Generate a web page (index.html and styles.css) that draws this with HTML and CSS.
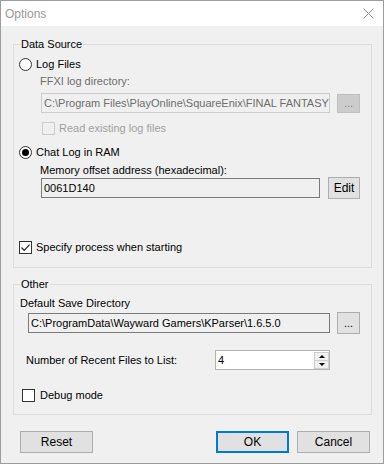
FILE: index.html
```html
<!DOCTYPE html>
<html>
<head>
  <title>Options</title>
  <link rel="stylesheet" href="styles.css">
</head>
<body>
  <div class="window">
    <div class="titlebar">
      <span class="title">Options</span>
      <svg class="close" width="11" height="11" viewBox="0 0 11 11">
        <path d="M0.5 0.5 L10.5 10.5 M10.5 0.5 L0.5 10.5" stroke="#8c8c8c" stroke-width="1" fill="none"/>
      </svg>
    </div>

    <div class="content">
      <fieldset class="group source">
        <legend>Data Source</legend>

        <div class="option first"><span class="radio"></span>Log Files</div>
        <div class="caption dim dir-caption">FFXI log directory:</div>
        <div class="field-row dir-row">
          <div class="textbox disabled dir-box">C:\Program Files\PlayOnline\SquareEnix\FINAL FANTASY XI</div>
          <div class="button disabled browse">...</div>
        </div>
        <div class="option disabled read"><span class="check"></span>Read existing log files</div>

        <div class="option ram"><span class="radio on"></span>Chat Log in RAM</div>
        <div class="caption offset-caption">Memory offset address (hexadecimal):</div>
        <div class="field-row offset-row">
          <div class="textbox offset-box">0061D140</div>
          <div class="button edit">Edit</div>
        </div>

        <div class="option process">
          <span class="check">
            <svg width="11" height="11" viewBox="0 0 11 11"><path d="M1.5 5.5 L4.2 8.3 L9.6 2.6" stroke="#222" stroke-width="1.2" fill="none"/></svg>
          </span>Specify process when starting
        </div>
      </fieldset>

      <fieldset class="group other">
        <legend>Other</legend>

        <div class="caption save-caption">Default Save Directory</div>
        <div class="field-row save-row">
          <div class="textbox save-box">C:\ProgramData\Wayward Gamers\KParser\1.6.5.0</div>
          <div class="button browse">...</div>
        </div>

        <div class="recent-row">
          <span>Number of Recent Files to List:</span>
          <div class="spinner">
            <span class="value">4</span>
            <div class="spin">
              <span class="up"></span>
              <span class="down"></span>
            </div>
          </div>
        </div>

        <div class="option debug"><span class="check"></span>Debug mode</div>
      </fieldset>

      <div class="actions">
        <div class="button action">Reset</div>
        <div class="button action ok">OK</div>
        <div class="button action">Cancel</div>
      </div>
    </div>
  </div>
</body>
</html>
```

FILE: styles.css
```css
body {
  margin: 0;
  background: #fff;
  font-family: "Liberation Sans", Arial, sans-serif;
  font-size: 11px;
  color: #000;
}

.window {
  width: 384px;
  height: 464px;
  box-sizing: border-box;
  border: 1px solid #9d9d9d;
  background: #f0f0f0;
}

.titlebar {
  height: 25px;
  background: #fff;
  display: flex;
  align-items: center;
  justify-content: space-between;
  padding: 0 9px 0 4px;
}

.title {
  font-size: 12px;
  color: #999;
}

.content {
  padding: 0 11px 0 12px;
}

/* group boxes */
.group {
  margin: 12px 0 0;
  padding: 0 0 13px;
  border: 1px solid #dcdcdc;
  min-width: 0;
}

.group legend {
  margin-left: 6px;
  padding: 0 1px;
  line-height: 13px;
}

.group.other {
  margin-top: 10px;
  padding-bottom: 12px;
}

/* radio / check rows */
.option {
  display: flex;
  align-items: center;
  height: 13px;
  line-height: 13px;
  margin-left: 5px;
}

.radio,
.check {
  width: 13px;
  height: 13px;
  box-sizing: border-box;
  border: 1px solid #333;
  background: #fff;
  margin-right: 4px;
  display: flex;
  align-items: center;
  justify-content: center;
  flex: none;
}

.radio {
  border-radius: 50%;
}

.radio.on::after {
  content: "";
  width: 7px;
  height: 7px;
  border-radius: 50%;
  background: #000;
}

.option.disabled {
  color: #a0a0a0;
}

.option.disabled .check {
  border-color: #cccccc;
  background: #f0f0f0;
}

.first { margin-top: 7px; }
.read { margin: 8px 0 0 28px; }
.ram { margin-top: 11px; }
.process { margin-top: 42px; }
.debug { margin: 19px 0 0 8px; }
.debug .check { margin-right: 5px; }

/* captions */
.caption {
  line-height: 13px;
}

.dim {
  color: #6d6d6d;
}

.dir-caption { margin: 4px 0 0 26px; }
.offset-caption { margin: 5px 0 0 26px; }
.save-caption { margin: 6px 0 0 6px; }

/* text boxes and buttons */
.field-row {
  display: flex;
  align-items: center;
  height: 22px;
}

.dir-row { margin: 4px 0 0 27px; }
.offset-row { margin: 0 0 0 27px; }
.save-row { margin: 2px 0 0 14px; }

.textbox {
  height: 20px;
  box-sizing: border-box;
  border: 1px solid #7a7a7a;
  background: #f0f0f0;
  padding: 0 2px;
  line-height: 18px;
  white-space: nowrap;
  overflow: hidden;
}

.textbox.disabled {
  border-color: #cccccc;
  color: #6d6d6d;
}

.dir-box { width: 289px; }
.offset-box { width: 279px; }
.save-box { width: 302px; }

.button {
  box-sizing: border-box;
  border: 1px solid #adadad;
  background: #e1e1e1;
  display: flex;
  align-items: center;
  justify-content: center;
}

.browse {
  width: 23px;
  height: 22px;
  margin-left: 7px;
}

.browse.disabled {
  height: 19px;
  background: #cccccc;
  border-color: #bfbfbf;
  color: #838383;
}

.edit {
  width: 32px;
  height: 22px;
  margin-left: 8px;
  font-size: 12px;
}

/* numeric spinner */
.recent-row {
  display: flex;
  align-items: center;
  height: 20px;
  margin: 16px 41px 0 12px;
}

.spinner {
  margin-left: auto;
  width: 115px;
  height: 20px;
  box-sizing: border-box;
  border: 1px solid #b4b4b4;
  background: #fff;
  display: flex;
  align-items: center;
  padding: 0 0 0 2px;
}

.spin {
  margin-left: auto;
  width: 15px;
  height: 17px;
  box-sizing: border-box;
  border: 1px solid #cfcfcf;
  background: #f0f0f0;
  display: flex;
  flex-direction: column;
}

.spin span {
  flex: 1;
  display: flex;
  align-items: center;
  justify-content: center;
}

.spin span + span {
  border-top: 1px solid #cfcfcf;
}

.up::after,
.down::after {
  content: "";
  border-left: 3px solid transparent;
  border-right: 3px solid transparent;
}

.up::after { border-bottom: 3px solid #000; }
.down::after { border-top: 3px solid #000; }

/* dialog buttons */
.actions {
  display: flex;
  gap: 8px;
  margin: 16px 2px 0 7px;
}

.action {
  width: 73px;
  height: 22px;
  font-size: 12px;
}

.ok {
  margin-left: auto;
  border: 2px solid #0078d7;
}
```
